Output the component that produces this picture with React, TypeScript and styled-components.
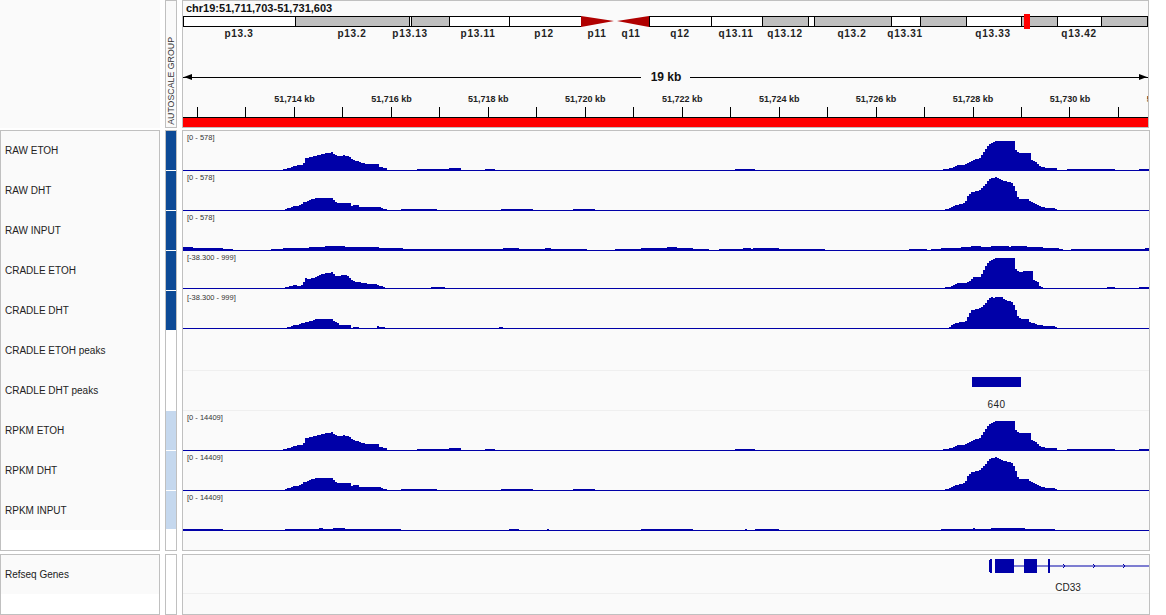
import styled, { createGlobalStyle } from "styled-components";

type Point = [number, number];

const GlobalStyle = createGlobalStyle`
  html, body {
    margin: 0;
    padding: 0;
    background: #ffffff;
    font-family: "Liberation Sans", Arial, sans-serif;
    color: #222222;
  }
`;

const BLUE = "#0000a8";
const LINE = "#c0c0c0";

const bump = (from: number, to: number, h: number, h2 = h): Point[] => [
  [from - 0.5, 0],
  [from, h],
  [to, h2],
  [to + 0.5, 0],
];

// flat runs of [from, to, height], used for the low input tracks
const spans = (runs: [number, number, number][]): Point[] =>
  runs.flatMap(([from, to, h]): Point[] => [
    [from, h],
    [to, h],
  ]);

const rawEtoh: Point[] = [
  [283, 0], [284, 1], [291, 3], [295, 4.5], [301, 5], [304, 7], [306, 12], [315, 14], [321, 16], [327, 17], [332, 18],
  [335, 16], [337, 14], [340, 14], [344, 15], [349, 14], [353, 10], [358, 9], [363, 7], [368, 6], [378, 6], [380, 3.5],
  [385, 2.5], [387, 1], [390, 0],
  ...bump(417, 448, 1.5), ...bump(449, 461, 2.5), ...bump(486, 494, 1.5), ...bump(735, 755, 1.5),
  [942, 0], [943, 1], [952, 2], [955, 4], [959, 5], [963, 5], [968, 7], [972, 9], [975, 11], [980, 12], [983, 17],
  [985, 20], [989, 26], [995, 29], [1015, 29], [1016, 20], [1018, 18], [1023, 17], [1030, 17], [1032, 10], [1035, 9],
  [1038, 6], [1041, 3], [1056, 2], [1057, 0],
  ...bump(1067, 1114, 1.5), ...bump(1139, 1149, 1.5),
];

const rawDht: Point[] = [
  [284, 0], [285, 1], [288, 2], [294, 4], [300, 5], [304, 8], [310, 10], [315, 12], [332, 12], [336, 8], [340, 7],
  [350, 7], [351, 4], [354, 5], [358, 5], [359, 3], [380, 3], [385, 1], [390, 0],
  ...bump(401, 437, 1.5), ...bump(501, 533, 1.5), ...bump(573, 595, 1.5),
  [944, 0], [945, 1], [950, 2], [956, 5], [965, 7], [968, 14], [972, 18], [980, 20], [985, 25], [989, 31], [992, 32],
  [997, 33], [1005, 29], [1013, 27], [1016, 19], [1019, 11], [1028, 11], [1030, 9], [1037, 6], [1042, 3], [1055, 2],
  [1059, 0],
];

const rawInput: Point[] = spans([
  [183, 192, 3], [192, 222, 2], [222, 232, 1], [232, 271, 0], [271, 282, 1], [282, 297, 2], [297, 308, 2.5],
  [308, 325, 3], [325, 345, 4], [345, 378, 3], [378, 403, 2], [403, 503, 1], [503, 518, 2], [518, 545, 1],
  [545, 550, 2], [550, 586, 1], [586, 615, 0], [615, 640, 1], [640, 666, 2], [666, 677, 3], [677, 693, 2],
  [693, 709, 1], [709, 718, 0], [718, 743, 1], [743, 750, 2], [750, 753, 1], [753, 778, 2], [778, 817, 1],
  [817, 824, 1.5], [824, 909, 0], [909, 927, 1], [927, 930, 0], [930, 940, 1], [940, 961, 2], [961, 971, 3],
  [971, 980, 4], [980, 990, 3], [990, 1008, 4], [1008, 1010, 3], [1010, 1026, 4], [1026, 1042, 3], [1042, 1058, 2],
  [1058, 1063, 1], [1063, 1070, 0], [1070, 1145, 1], [1145, 1149, 2],
]);

const cradleEtoh: Point[] = [
  [284, 0], [285, 1], [291, 2], [295, 3], [299, 2], [303, 4], [306, 10], [310, 9], [315, 11], [320, 13], [325, 15],
  [332, 16], [336, 12], [343, 13], [347, 13], [351, 9], [354, 7], [364, 5], [376, 4], [380, 2.5], [385, 1], [387, 0],
  ...bump(432, 445, 1.5),
  [944, 0], [945, 1], [950, 1], [953, 3], [957, 5], [963, 5], [968, 6], [974, 11], [980, 11], [983, 16], [985, 21],
  [989, 27], [995, 30], [1015, 30], [1016, 19], [1020, 16], [1023, 17], [1032, 17], [1033, 9], [1038, 6], [1040, 2],
  [1046, 0],
  ...bump(1108, 1114, 1.5), ...bump(1139, 1149, 1.5),
];

const cradleDht: Point[] = [
  [286, 0], [287, 1], [292, 2], [294, 3], [298, 3], [302, 5], [310, 7], [316, 9], [332, 9], [336, 6], [341, 3], [350, 3],
  [350.5, 0],
  ...bump(354, 358, 1), ...bump(377, 384, 2, 1), ...bump(500, 502, 1),
  [948, 0], [949, 1], [954, 4], [959, 6], [966, 7], [969, 14], [972, 18], [980, 20], [985, 24], [989, 30], [992, 31],
  [993, 30], [995, 31], [1003, 31], [1005, 28], [1013, 26], [1016, 18], [1019, 10], [1023, 9], [1029, 9], [1030, 6],
  [1037, 4], [1039, 3], [1055, 2], [1058, 0],
];

const rpkmInput: Point[] = spans([
  [183, 223, 1], [223, 284, 0], [284, 319, 1], [319, 323, 2], [323, 333, 1], [333, 344, 2], [344, 401, 1],
  [401, 508, 0], [508, 518, 1], [518, 546, 0], [546, 548, 1], [548, 641, 0], [641, 692, 1], [692, 744, 0],
  [744, 746, 1], [746, 755, 0], [755, 778, 1], [778, 940, 0], [940, 972, 1], [972, 975, 2], [975, 990, 1],
  [990, 1025, 2], [1025, 1055, 1],
]);

const heightAt = (points: Point[], x: number) => {
  for (let i = 1; i < points.length; i++) {
    const [x0, h0] = points[i - 1];
    const [x1, h1] = points[i];
    if (x >= x0 && x <= x1) return h0 + ((h1 - h0) * (x - x0)) / (x1 - x0 || 1);
  }
  return 0;
};

// coverage is binned at 2px like the original track, x values are page coordinates
const coveragePath = (points: Point[], base: number) => {
  let d = `M0 ${base}`;
  for (let x = 183; x < 1149; x += 2) {
    const h = Math.round(heightAt(points, x + 1) * 2) / 2;
    d += `V${base - h}H${x + 2 - 183}`;
  }
  return `${d}V${base}Z`;
};

const Page = styled.div`
  width: 1166px;
  height: 615px;
  overflow: hidden;
`;

const Row = styled.div<{ $main: number; $height: number; $gap?: number }>`
  display: grid;
  grid-template-columns: 160px 12px ${(p) => p.$main}px;
  column-gap: 5px;
  height: ${(p) => p.$height}px;
  margin-bottom: ${(p) => p.$gap ?? 0}px;
`;

const Panel = styled.div`
  box-sizing: border-box;
  border: 1px solid ${LINE};
  overflow: hidden;
  position: relative;
`;

const HeaderNames = styled.div`
  background: #fafafa;
`;

const AutoscalePanel = styled(Panel)`
  display: flex;
  align-items: flex-end;
  justify-content: center;
  background: #fafafa;
  padding-bottom: 2px;
`;

const AutoscaleLabel = styled.span`
  writing-mode: vertical-rl;
  transform: rotate(180deg);
  font-size: 8.8px;
  line-height: 10px;
  color: #333333;
  white-space: nowrap;
`;

const HeaderMain = styled(Panel)`
  background: #fafafa;
  display: flex;
  flex-direction: column;
`;

const Locus = styled.div`
  font-weight: bold;
  font-size: 11px;
  line-height: 15px;
  padding-left: 3px;
  color: #111111;
`;

const Ideogram = styled.div`
  display: flex;
  position: relative;
  height: 11px;
`;

const Band = styled.div<{ $width: number; $gray?: boolean; $last?: boolean }>`
  box-sizing: border-box;
  width: ${(p) => p.$width}px;
  flex: none;
  background: ${(p) => (p.$gray ? "#bfbfbf" : "#ffffff")};
  border: 1px solid #000000;
  border-right-width: ${(p) => (p.$last ? 1 : 0)}px;
`;

const Centromere = styled.svg`
  flex: none;
  display: block;
`;

const CytoMarker = styled.div`
  position: absolute;
  left: 841px;
  top: -2px;
  width: 6px;
  height: 15px;
  background: #ff0000;
`;

const BandLabels = styled.div`
  display: flex;
  height: 13px;
`;

const BandLabel = styled.span<{ $gap: number }>`
  flex: none;
  width: 30px;
  margin-left: ${(p) => p.$gap}px;
  display: flex;
  justify-content: center;
  white-space: nowrap;
  font-size: 10px;
  font-weight: bold;
  line-height: 13px;
  letter-spacing: 0.7px;
  color: #222222;
`;

const ScaleBar = styled.div`
  display: flex;
  align-items: center;
  height: 14px;
  margin-top: 30px;
`;

const ScaleLine = styled.div<{ $side: "left" | "right" }>`
  flex: 1;
  height: 1px;
  background: #000000;
  position: relative;

  &::after {
    content: "";
    position: absolute;
    top: -3px;
    ${(p) => p.$side}: 1px;
    border-top: 3px solid transparent;
    border-bottom: 3px solid transparent;
    ${(p) => (p.$side === "left" ? "border-right: 8px solid #000000;" : "border-left: 8px solid #000000;")}
  }
`;

const ScaleText = styled.span`
  font-size: 12px;
  font-weight: bold;
  padding: 0 9px 0 10px;
  color: #111111;
`;

const RulerLabels = styled.div`
  display: flex;
  height: 12px;
  margin-top: 9px;
  padding-left: 63px;
  white-space: nowrap;
`;

const RulerLabel = styled.span`
  flex: none;
  width: 96.94px;
  text-align: center;
  font-size: 9px;
  font-weight: bold;
  line-height: 12px;
  color: #222222;
`;

const Ticks = styled.div`
  display: flex;
  height: 10px;
  margin-top: 2px;
  padding-left: 14px;
`;

const Tick = styled.div`
  box-sizing: border-box;
  flex: none;
  width: 48.47px;
  border-left: 1px solid #000000;
`;

const RedBar = styled.div`
  height: 9px;
  background: #ff0000;
  border-top: 1px solid #000000;
`;

const NamesPanel = styled(Panel)`
  background: #ffffff;
`;

const NameRow = styled.div`
  box-sizing: border-box;
  height: 40px;
  padding: 0 0 2px 4px;
  display: flex;
  align-items: center;
  background: #fafafa;
  font-size: 10px;
  color: #222222;
  white-space: nowrap;

  &:last-child {
    height: 39px;
    padding-bottom: 0;
  }
`;

const GutterCell = styled.div<{ $tone?: "dark" | "light" }>`
  box-sizing: border-box;
  height: 40px;
  border-bottom: 1px solid #ffffff;
  background: ${(p) => (p.$tone === "dark" ? "#0d4a96" : p.$tone === "light" ? "#c5d8ee" : "#ffffff")};

  &:last-child {
    height: 39px;
  }
`;

const MainPanel = styled(Panel)`
  background: #fafafa;
`;

const TrackRow = styled.div`
  position: relative;
  box-sizing: border-box;
  height: 40px;
`;

const PeakRow = styled(TrackRow)`
  border-bottom: 1px solid #efefef;
`;

const PeakFeature = styled.div`
  display: flex;
  flex-direction: column;
  align-items: center;
  width: 49px;
  margin-left: 789px;
  padding-top: 6px;
`;

const PeakBlock = styled.div`
  width: 49px;
  height: 10px;
  background: ${BLUE};
`;

const PeakName = styled.span`
  font-size: 10px;
  line-height: 12px;
  margin-top: 12px;
  letter-spacing: 0.5px;
  color: #222222;
`;

const RangeLabel = styled.span`
  position: absolute;
  left: 4px;
  top: 2px;
  font-size: 7.5px;
  line-height: 9px;
  color: #333333;
`;

const CoverageSvg = styled.svg`
  display: block;
`;

const GeneTop = styled.div`
  box-sizing: border-box;
  height: 39px;
  border-bottom: 1px solid #efefef;
`;

const GeneSvg = styled.svg`
  display: block;
`;

const GeneName = styled.div`
  width: 50px;
  margin-left: 860px;
  text-align: center;
  font-size: 10px;
  line-height: 12px;
  margin-top: 5px;
  color: #222222;
`;

const bands: { width: number; gray?: boolean }[] = [
  { width: 112 }, { width: 114, gray: true }, { width: 2 }, { width: 38, gray: true }, { width: 60 }, { width: 72 },
];
const qBands: { width: number; gray?: boolean }[] = [
  { width: 62 }, { width: 51 }, { width: 46, gray: true }, { width: 6 }, { width: 77, gray: true }, { width: 29 },
  { width: 46, gray: true }, { width: 55 }, { width: 36, gray: true }, { width: 44 }, { width: 47, gray: true },
];

const bandLabels: [string, number][] = [
  ["p13.3", 239], ["p13.2", 352], ["p13.13", 410], ["p13.11", 478], ["p12", 544], ["p11", 597], ["q11", 631],
  ["q12", 680], ["q13.11", 736], ["q13.12", 785], ["q13.2", 852], ["q13.31", 905], ["q13.33", 993], ["q13.42", 1079],
];

const rulerKb = [51714, 51716, 51718, 51720, 51722, 51724, 51726, 51728, 51730, 51732];

interface TrackInfo {
  name: string;
  tone?: "dark" | "light";
  range?: string;
  points?: Point[];
  base?: number;
  peak?: boolean;
}

// the CRADLE tracks have a negative range minimum, so their zero line sits higher in the row
const tracks: TrackInfo[] = [
  { name: "RAW ETOH", tone: "dark", range: "[0 - 578]", points: rawEtoh },
  { name: "RAW DHT", tone: "dark", range: "[0 - 578]", points: rawDht },
  { name: "RAW INPUT", tone: "dark", range: "[0 - 578]", points: rawInput },
  { name: "CRADLE ETOH", tone: "dark", range: "[-38.300 - 999]", points: cradleEtoh, base: 37 },
  { name: "CRADLE DHT", tone: "dark", range: "[-38.300 - 999]", points: cradleDht, base: 37 },
  { name: "CRADLE ETOH peaks" },
  { name: "CRADLE DHT peaks", peak: true },
  { name: "RPKM ETOH", tone: "light", range: "[0 - 14409]", points: rawEtoh },
  { name: "RPKM DHT", tone: "light", range: "[0 - 14409]", points: rawDht },
  { name: "RPKM INPUT", tone: "light", range: "[0 - 14409]", points: rpkmInput },
];

const Coverage = ({ points, base = 39 }: { points: Point[]; base?: number }) => (
  <CoverageSvg width={966} height={40} viewBox="0 0 966 40" shapeRendering="crispEdges">
    <path d={coveragePath(points, base)} fill={BLUE} />
    <rect x={0} y={base} width={966} height={1} fill={BLUE} />
  </CoverageSvg>
);

const Gene = () => (
  <GeneSvg width={966} height={22} viewBox="0 0 966 22" fill="none">
    <g fill={BLUE} shapeRendering="crispEdges">
      <rect x={806} y={5} width={1} height={12} />
      <rect x={807} y={4} width={2} height={14} />
      <rect x={812} y={4} width={19} height={14} />
      <rect x={841} y={4} width={13} height={14} />
      <rect x={865} y={4} width={2} height={14} />
    </g>
    <rect x={831} y={10.5} width={10} height={1} fill={BLUE} />
    <rect x={854} y={10.5} width={112} height={1} fill={BLUE} />
    {[881, 911, 941].map((x) => (
      <path key={x} d={`M${x - 1} 9l2 2-2 2`} stroke={BLUE} strokeWidth={1} />
    ))}
  </GeneSvg>
);

export default function App() {
  return (
    <Page>
      <GlobalStyle />
      <Row $main={967} $height={128} $gap={2}>
        <HeaderNames />
        <AutoscalePanel>
          <AutoscaleLabel>AUTOSCALE GROUP</AutoscaleLabel>
        </AutoscalePanel>
        <HeaderMain>
          <Locus>chr19:51,711,703-51,731,603</Locus>
          <Ideogram>
            {bands.map((b, i) => (
              <Band key={i} $width={b.width} $gray={b.gray} />
            ))}
            <Centromere width={36} height={11} viewBox="0 0 36 11">
              <path d="M0 0L33 5L0 11Z" fill="#b00000" />
            </Centromere>
            <Centromere width={32} height={11} viewBox="0 0 32 11">
              <path d="M32 0L0 5L32 11Z" fill="#b00000" />
            </Centromere>
            {qBands.map((b, i) => (
              <Band key={i} $width={b.width} $gray={b.gray} $last={i === qBands.length - 1} />
            ))}
            <CytoMarker />
          </Ideogram>
          <BandLabels>
            {bandLabels.map(([label, center], i) => (
              <BandLabel key={label} $gap={center - (i ? bandLabels[i - 1][1] : 168) - 30}>
                {label}
              </BandLabel>
            ))}
          </BandLabels>
          <ScaleBar>
            <ScaleLine $side="left" />
            <ScaleText>19 kb</ScaleText>
            <ScaleLine $side="right" />
          </ScaleBar>
          <RulerLabels>
            {rulerKb.map((kb) => (
              <RulerLabel key={kb}>{kb.toLocaleString("en-US")} kb</RulerLabel>
            ))}
          </RulerLabels>
          <Ticks>
            {Array.from({ length: 20 }, (_, i) => (
              <Tick key={i} />
            ))}
          </Ticks>
          <RedBar />
        </HeaderMain>
      </Row>

      <Row $main={968} $height={421} $gap={3}>
        <NamesPanel>
          {tracks.map((t) => (
            <NameRow key={t.name}>{t.name}</NameRow>
          ))}
        </NamesPanel>
        <Panel>
          {tracks.map((t) => (
            <GutterCell key={t.name} $tone={t.tone} />
          ))}
        </Panel>
        <MainPanel>
          {tracks.map((t) =>
            t.points ? (
              <TrackRow key={t.name}>
                <Coverage points={t.points} base={t.base} />
                <RangeLabel>{t.range}</RangeLabel>
              </TrackRow>
            ) : (
              <PeakRow key={t.name}>
                {t.peak && (
                  <PeakFeature>
                    <PeakBlock />
                    <PeakName>640</PeakName>
                  </PeakFeature>
                )}
              </PeakRow>
            )
          )}
        </MainPanel>
      </Row>

      <Row $main={968} $height={61}>
        <NamesPanel>
          <NameRow>Refseq Genes</NameRow>
        </NamesPanel>
        <Panel />
        <MainPanel>
          <GeneTop>
            <Gene />
            <GeneName>CD33</GeneName>
          </GeneTop>
        </MainPanel>
      </Row>
    </Page>
  );
}
